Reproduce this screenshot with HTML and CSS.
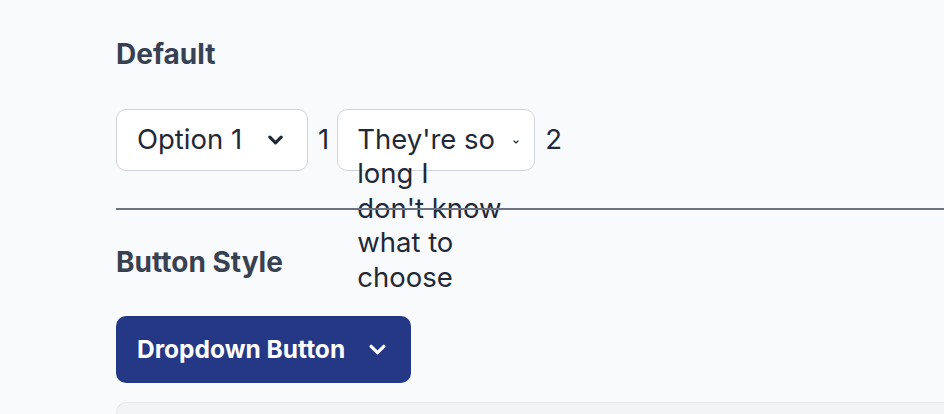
FILE: index.html
```html
<!DOCTYPE html>
<html lang="en">
<head>
<meta charset="utf-8">
<title>Dropdowns</title>
<link rel="stylesheet" href="styles.css">
</head>
<body>
<main class="page">
  <h2 class="heading">Default</h2>
  <div class="row">
    <div class="select select-short">
      <span class="select-text">Option 1</span>
      <svg class="chev" viewBox="0 0 16 10" width="15" height="10"><path d="M2 2 L8 8 L14 2" fill="none" stroke="#1f2937" stroke-width="3.4" stroke-linecap="round" stroke-linejoin="round"/></svg>
    </div>
    <span class="num num-1">1</span>
    <div class="select select-long">
      <span class="select-text wrap">They're so long I don't&nbsp;know what to choose</span>
      <svg class="chev-small" viewBox="0 0 6 4" width="6" height="4"><path d="M1 1 L3 3 L5 1" fill="none" stroke="#1f2937" stroke-width="1.2" stroke-linecap="round"/></svg>
    </div>
    <span class="num num-2">2</span>
  </div>
  <hr class="divider">
  <h2 class="heading heading-2">Button Style</h2>
  <button class="dd-button" type="button">
    <span>Dropdown Button</span>
    <svg class="chev" viewBox="0 0 16 10" width="17" height="11"><path d="M2 2 L8 8 L14 2" fill="none" stroke="#ffffff" stroke-width="3" stroke-linecap="round" stroke-linejoin="round"/></svg>
  </button>
  <div class="panel"></div>
</main>
</body>
</html>
```
FILE: styles.css
```css
html, body {
  margin: 0;
  padding: 0;
  background: #f8fafc;
  font-family: Inter, "Noto Sans", sans-serif;
  color: #1f2937;
  overflow: hidden;
}
.page {
  padding: 37px 0 0 116px;
}
.heading {
  margin: 0;
  font-size: 28px;
  line-height: 34.5px;
  font-weight: 700;
  color: #374151;
}
.row {
  display: flex;
  align-items: center;
  margin-top: 37px;
  height: 62px;
}
.select {
  box-sizing: border-box;
  height: 62px;
  background: #ffffff;
  border: 1.5px solid #d1d5db;
  border-radius: 10px;
  display: flex;
  align-items: flex-start;
  font-size: 27.5px;
  line-height: 34.5px;
  color: #1f2937;
}
.select-short {
  width: 192px;
  padding: 12px 24px 0 20px;
  justify-content: space-between;
}
.select-short .chev {
  margin-top: 13px;
}
.select-long {
  width: 198px;
  padding: 12px 0 0 19px;
  position: relative;
}
.select-text.wrap {
  width: 146px;
}
.chev-small {
  position: absolute;
  right: 15px;
  top: 30px;
}
.num {
  font-size: 27.5px;
  line-height: 34.5px;
  color: #1f2937;
}
.num-1 {
  margin: 0 8px 0 10px;
}
.num-2 {
  margin-left: 10px;
}
.divider {
  position: relative;
  margin: 37px 0 0 0;
  border: 0;
  height: 2px;
  background: #6b7280;
}
.heading-2 {
  margin-top: 35.5px;
}
.dd-button {
  margin-top: 36px;
  display: flex;
  align-items: center;
  gap: 24px;
  width: 295px;
  height: 67px;
  box-sizing: border-box;
  padding: 0 0 0 21px;
  background: #253885;
  color: #ffffff;
  border: 0;
  border-radius: 10px;
  font-family: Inter, "Noto Sans", sans-serif;
  font-size: 24.5px;
  font-weight: 700;
}
.panel {
  margin-top: 19px;
  height: 40px;
  background: #f3f4f6;
  border: 1.5px solid #e5e7eb;
  border-right: 0;
  border-radius: 10px 0 0 0;
}
```
